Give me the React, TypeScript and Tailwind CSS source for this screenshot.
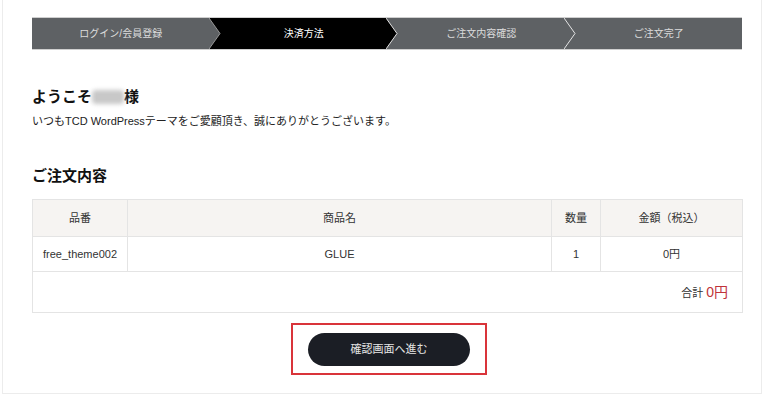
const steps = [
  { label: 'ログイン/会員登録', bg: 'bg-[#5e6164]', fill: '#5e6164', text: 'text-[#dcdcdc]' },
  { label: '決済方法', bg: 'bg-black', fill: '#000000', text: 'text-white' },
  { label: 'ご注文内容確認', bg: 'bg-[#5e6164]', fill: '#5e6164', text: 'text-[#dcdcdc]' },
  { label: 'ご注文完了', bg: 'bg-[#5e6164]', fill: '#5e6164', text: 'text-[#dcdcdc]' },
]

const jp = { fontFamily: '"Liberation Sans", "Noto Sans CJK JP", sans-serif' }

export default function App() {
  return (
    <div className="w-[768px] h-[396px] bg-white overflow-hidden" style={jp}>
      <div className="ml-[2px] w-[760px] h-[394px] border-x border-b border-[#ececec] flex flex-col">
        {/* steps */}
        <div className="flex h-[33px] mt-[17px] ml-[29px] w-[710px] border-y border-[#cfcfcf]">
          {steps.map((s, i) => (
            <div key={s.label} className={`relative flex-1 flex items-center justify-center text-[10px] ${s.bg} ${s.text}`}>
              <span className={i === 0 ? '' : 'pl-[11px]'}>{s.label}</span>
              {i < steps.length - 1 && (
                <svg className="absolute top-0 right-[-11px] h-full w-[12px] z-10" viewBox="0 0 12 33" preserveAspectRatio="none">
                  <polygon points="0,0 11,16.5 0,33" fill={s.fill} />
                  <polyline points="0,0 11,16.5 0,33" fill="none" stroke={i === 0 ? '#9a9a9a' : '#e8e8e8'} strokeWidth="1" />
                </svg>
              )}
            </div>
          ))}
        </div>

        {/* greeting */}
        <div className="ml-[29px] w-[710px] mt-[36px]">
          <h1 className="text-[15px] leading-[22px] font-bold text-[#111] flex items-center">
            ようこそ
            <span className="inline-block w-[32px] h-[14px] bg-[#c8c8c8] blur-[2px] rounded-sm"></span>
            様
          </h1>
          <p className="mt-[5px] text-[11px] leading-[16px] text-[#222]">
            いつもTCD WordPressテーマをご愛顧頂き、誠にありがとうございます。
          </p>
          <h2 className="mt-[36px] text-[15px] leading-[22px] font-bold text-[#111]">ご注文内容</h2>
        </div>

        {/* table */}
        <table className="ml-[29px] mt-[12px] w-[710px] table-fixed border-collapse text-[11px] text-[#333]">
          <colgroup>
            <col className="w-[95px]" />
            <col className="w-[424px]" />
            <col className="w-[49px]" />
            <col className="w-[142px]" />
          </colgroup>
          <thead>
            <tr className="h-[37px] bg-[#f6f4f2]">
              <th className="border border-[#e4e4e4] font-normal">品番</th>
              <th className="border border-[#e4e4e4] font-normal">商品名</th>
              <th className="border border-[#e4e4e4] font-normal">数量</th>
              <th className="border border-[#e4e4e4] font-normal">金額（税込）</th>
            </tr>
          </thead>
          <tbody>
            <tr className="h-[35px]">
              <td className="border border-[#e4e4e4] text-center">free_theme002</td>
              <td className="border border-[#e4e4e4] text-center">GLUE</td>
              <td className="border border-[#e4e4e4] text-center">1</td>
              <td className="border border-[#e4e4e4] text-center">0円</td>
            </tr>
            <tr className="h-[41px]">
              <td colSpan={4} className="border border-[#e4e4e4] text-right pr-[14px]">
                合計 <span className="text-[14px] text-[#c0333a]">0円</span>
              </td>
            </tr>
          </tbody>
        </table>

        {/* button */}
        <div className="flex justify-center mt-[10px] ml-[29px] w-[710px] pl-[4px]">
          <div className="w-[196px] h-[52px] border-2 border-[#d9343a] flex items-center justify-center">
            <button className="w-[162px] h-[33px] rounded-full bg-[#1b1e25] text-[11px] text-[#e6e6e6]">
              確認画面へ進む
            </button>
          </div>
        </div>
      </div>
    </div>
  )
}
